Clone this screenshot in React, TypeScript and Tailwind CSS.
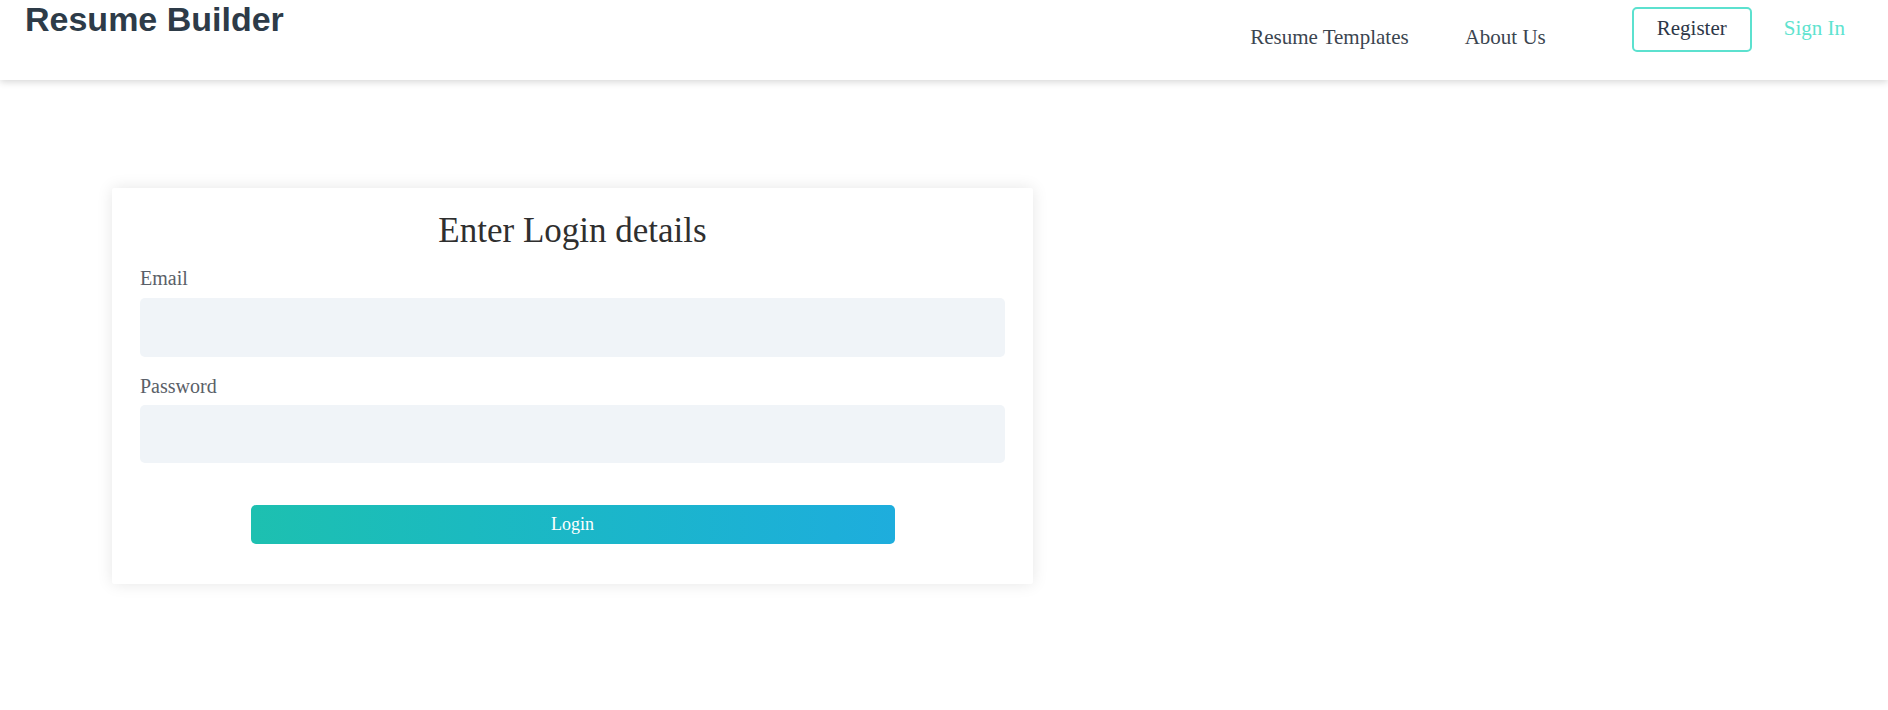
const App = () => {
  return (
    <div className="min-h-screen bg-white font-['Liberation_Serif',serif]">
      {/* Header */}
      <header className="relative flex h-[80px] justify-between bg-white shadow-[0_2px_7px_rgba(0,0,0,0.16)]">
        <h1 className="pl-[25px] font-['Liberation_Sans',Arial,sans-serif] text-[34px] font-bold leading-[38px] text-[#2d3b48]">
          Resume Builder
        </h1>
        <nav className="flex items-start pr-[43px] text-[21px] leading-[24px]">
          <a href="#" className="mt-[25px] text-[#3b4550]">Resume Templates</a>
          <a href="#" className="ml-[56px] mt-[25px] text-[#3b4550]">About Us</a>
          <a
            href="#"
            className="ml-[86px] mt-[7px] rounded-[5px] border-2 border-[#5ce1cf] px-[23px] pb-[10px] pt-[7px] text-[#2d3748]"
          >
            Register
          </a>
          <a href="#" className="ml-[32px] mt-[16px] text-[#5ee3cf]">Sign In</a>
        </nav>
      </header>

      {/* Login card */}
      <main className="pl-[112px] pt-[108px]">
        <div className="w-[921px] rounded-[2px] bg-white px-[28px] pb-[40px] pt-[23px] shadow-[0_0_16px_rgba(0,0,0,0.1)]">
          <h2 className="text-center text-[35px] leading-[40px] text-[#2f2f2f]">Enter Login details</h2>

          <label className="mt-[16px] block text-[20px] leading-[23px] text-[#5a6068]">Email</label>
          <input type="email" className="mt-[8px] block h-[59px] w-full rounded-[5px] bg-[#f0f4f8] outline-none" />

          <label className="mt-[18px] block text-[20px] leading-[23px] text-[#5a6068]">Password</label>
          <input type="password" className="mt-[7px] block h-[58px] w-full rounded-[5px] bg-[#f0f4f8] outline-none" />

          <button className="mx-auto mt-[42px] block h-[39px] w-[644px] rounded-[5px] bg-linear-to-r from-[#1dc0b0] to-[#1eaddd] text-[18px] leading-[39px] text-white">
            Login
          </button>
        </div>
      </main>
    </div>
  );
};

export default App;
